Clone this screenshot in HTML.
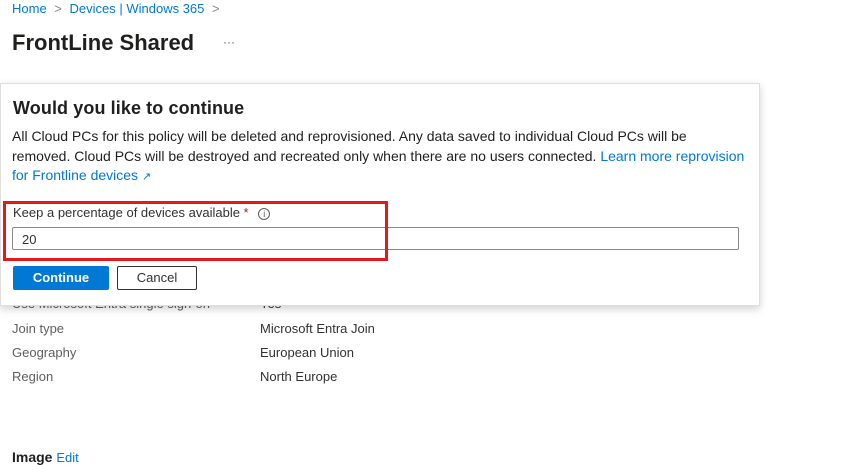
<!DOCTYPE html>
<html><head><meta charset="utf-8"><style>
*{margin:0;padding:0;box-sizing:border-box}
body{width:860px;height:463px;overflow:hidden;background:#fff;font-family:"Liberation Sans",sans-serif;color:#323130;position:relative}
.a{position:absolute;white-space:nowrap}
.link{color:#0078d4}
</style></head><body>
<div class="a link" style="left:12px;top:1px;font-size:13px">Home <span style="color:#8a8886;margin:0 4px">&gt;</span> Devices | Windows 365 <span style="color:#8a8886;margin-left:4px">&gt;</span></div>
<div class="a" style="left:12px;top:30px;font-size:22px;font-weight:bold;color:#201f1e">FrontLine Shared</div>
<div class="a" style="left:223px;top:35px;font-size:12px;color:#605e5c">···</div>

<div class="a" style="left:12px;top:296px;font-size:13px;color:#605e5c">Use Microsoft Entra single sign-on</div>
<div class="a" style="left:260px;top:296px;font-size:13px">Yes</div>
<div class="a" style="left:12px;top:321px;font-size:13px;color:#605e5c">Join type</div>
<div class="a" style="left:260px;top:321px;font-size:13px">Microsoft Entra Join</div>
<div class="a" style="left:12px;top:345px;font-size:13px;color:#605e5c">Geography</div>
<div class="a" style="left:260px;top:345px;font-size:13px">European Union</div>
<div class="a" style="left:12px;top:369px;font-size:13px;color:#605e5c">Region</div>
<div class="a" style="left:260px;top:369px;font-size:13px">North Europe</div>
<div class="a" style="left:12px;top:449px;font-size:14px;font-weight:bold;color:#201f1e">Image <span class="link" style="font-weight:normal;font-size:13px">Edit</span></div>

<div class="a" style="left:0;top:83px;width:760px;height:223px;background:#fff;border:1px solid #e1dfdd;box-shadow:0 3px 8px rgba(0,0,0,.18)"></div>
<div class="a" style="left:13px;top:98px;font-size:18px;font-weight:bold;color:#201f1e;letter-spacing:0.1px">Would you like to continue</div>
<div class="a" style="left:12px;top:127px;font-size:14px;line-height:19.5px;color:#201f1e">All Cloud PCs for this policy will be deleted and reprovisioned. Any data saved to individual Cloud PCs will be<br>removed. Cloud PCs will be destroyed and recreated only when there are no users connected. <span class="link">Learn more reprovision</span><br><span class="link">for Frontline devices <span style="font-size:11px">↗</span></span></div>
<div class="a" style="left:13px;top:205px;font-size:13px">Keep a percentage of devices available <span style="color:#a4262c">*</span> <span style="display:inline-block;width:12px;height:12px;border:1px solid #605e5c;border-radius:50%;font-size:9px;text-align:center;line-height:10px;margin-left:6px;color:#605e5c">i</span></div>
<div class="a" style="left:12px;top:227px;width:727px;height:23px;border:1px solid #8a8886;border-radius:2px;font-size:13px;padding:4px 9px">20</div>
<div class="a" style="left:3px;top:201px;width:385px;height:60px;border:3px solid #e3191b"></div>
<div class="a" style="left:13px;top:266px;width:96px;height:24px;background:#0078d4;border-radius:2px;color:#fff;font-size:13px;font-weight:bold;text-align:center;line-height:24px">Continue</div>
<div class="a" style="left:117px;top:266px;width:80px;height:24px;border:1px solid #323130;border-radius:2px;font-size:13px;text-align:center;line-height:22px">Cancel</div>
</body></html>
